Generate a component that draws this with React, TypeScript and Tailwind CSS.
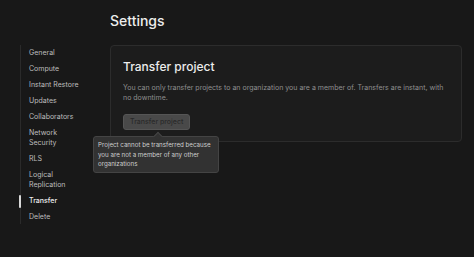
import React from "react";

const navItems = [
  "General",
  "Compute",
  "Instant Restore",
  "Updates",
  "Collaborators",
  "Network Security",
  "RLS",
  "Logical Replication",
  "Transfer",
  "Delete",
];

const Sidebar = () => {
  return (
    <nav className="w-[90px] shrink-0 pt-[45px]">
      <ul className="flex flex-col gap-[6px] border-l border-[#2a2a2a] pt-[3px] pb-[2px] pl-[8px]">
        {navItems.map((item) => {
          const active = item === "Transfer";
          return (
            <li key={item} className="relative w-[54px]">
              {active && (
                <span className="absolute -left-[10px] -top-[1px] h-[13px] w-[2px] rounded bg-[#d8d8d8]" />
              )}
              <span
                className={
                  "block text-[7px] leading-[10px] " +
                  (active ? "font-medium text-[#ededed]" : "text-[#bdbdbd]")
                }
              >
                {item}
              </span>
            </li>
          );
        })}
      </ul>
    </nav>
  );
};

const TransferCard = () => {
  return (
    <section className="rounded-[4px] border border-[#2c2c2c] bg-[#1c1c1c] px-3 pt-[13px] pb-[11px]">
      <h2 className="text-[12px] font-medium leading-4 text-[#ededed]">Transfer project</h2>
      <p className="mt-[8px] text-[7px] leading-[10px] text-[#8f8f8f]">
        You can only transfer projects to an organization you are a member of. Transfers are instant, with
        no downtime.
      </p>
      <div className="relative mt-[11px] flex w-fit">
        <button
          disabled
          className="h-[16px] rounded-[3px] border border-[#555] bg-[#494949] px-[6px] text-[7px] font-medium leading-[14px] text-[#2a2a2a]"
        >
          Transfer project
        </button>
        <div className="absolute left-[-30px] top-[22px] z-10 w-[126px] rounded-[3px] border border-[#444] bg-[#323232] px-[4px] py-[3px] text-[6.2px] leading-[9.5px] text-[#cfcfcf]">
          <span className="absolute -top-[4px] left-[61px] h-[6px] w-[6px] rotate-45 border-l border-t border-[#444] bg-[#323232]" />
          Project cannot be transferred because you are not a member of any other organizations
        </div>
      </div>
    </section>
  );
};

export default function App() {
  return (
    <div
      className="flex h-[257px] w-[474px] overflow-hidden bg-[#181818]"
      style={{ fontFamily: "Inter, 'Liberation Sans', sans-serif" }}
    >
      <div className="w-[20px] shrink-0" />
      <Sidebar />
      <main className="flex-1 pr-[12px]">
        <h1 className="pt-[11px] text-[14px] font-medium leading-5 text-[#ededed]">Settings</h1>
        <div className="mt-[14px]">
          <TransferCard />
        </div>
      </main>
    </div>
  );
}
